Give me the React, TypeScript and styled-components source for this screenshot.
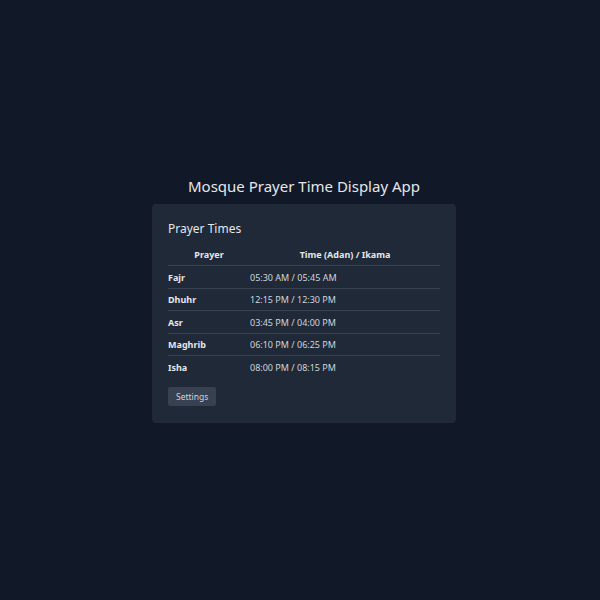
import React from "react";
import styled, { createGlobalStyle } from "styled-components";

const GlobalStyle = createGlobalStyle`
  html, body {
    margin: 0;
    padding: 0;
    background-color: #111827;
  }
  body {
    font-family: "Noto Sans", "Open Sans", sans-serif;
  }
`;

const Page = styled.div`
  min-height: 100vh;
  box-sizing: border-box;
  padding: 0 0 2px 8px;
  display: flex;
  flex-direction: column;
  align-items: center;
  justify-content: center;
  background-color: #111827;
  color: #e5e7eb;
`;

const AppTitle = styled.h1`
  margin: 0 0 7px;
  font-size: 15px;
  font-weight: 400;
  line-height: 22px;
  color: #e5e7eb;
`;

const Card = styled.div`
  width: 304px;
  box-sizing: border-box;
  padding: 16px 16px 17px;
  background-color: #1f2937;
  border-radius: 4px;
`;

const CardTitle = styled.h2`
  margin: 0 0 6px;
  font-size: 12px;
  font-weight: 400;
  line-height: 18px;
  color: #e5e7eb;
`;

const Table = styled.table`
  width: 100%;
  border-collapse: collapse;
  font-size: 9px;
  color: #d1d5db;
`;

const HeadCell = styled.th<{ $width?: number }>`
  width: ${(p) => (p.$width ? `${p.$width}px` : "auto")};
  height: 21px;
  padding: 0;
  font-weight: 700;
  text-align: center;
  color: #e5e7eb;
  border-bottom: 1px solid #374151;
`;

const Row = styled.tr`
  border-bottom: 1px solid #374151;
  &:last-child {
    border-bottom: none;
  }
`;

const Cell = styled.td<{ $bold?: boolean }>`
  height: 21.5px;
  padding: 0;
  text-align: left;
  font-weight: ${(p) => (p.$bold ? 700 : 400)};
  color: ${(p) => (p.$bold ? "#e5e7eb" : "#d1d5db")};
`;

const Button = styled.button`
  margin-top: 9px;
  height: 19px;
  padding: 0 8px;
  border: none;
  border-radius: 2px;
  background-color: #374151;
  color: #d1d5db;
  font-family: inherit;
  font-size: 8.5px;
  cursor: pointer;
`;

const prayers = [
  { name: "Fajr", adan: "05:30 AM", ikama: "05:45 AM" },
  { name: "Dhuhr", adan: "12:15 PM", ikama: "12:30 PM" },
  { name: "Asr", adan: "03:45 PM", ikama: "04:00 PM" },
  { name: "Maghrib", adan: "06:10 PM", ikama: "06:25 PM" },
  { name: "Isha", adan: "08:00 PM", ikama: "08:15 PM" },
];

const App: React.FC = () => {
  return (
    <>
      <GlobalStyle />
      <Page>
        <AppTitle>Mosque Prayer Time Display App</AppTitle>
        <Card>
          <CardTitle>Prayer Times</CardTitle>
          <Table>
            <thead>
              <tr>
                <HeadCell $width={82}>Prayer</HeadCell>
                <HeadCell>Time (Adan) / Ikama</HeadCell>
              </tr>
            </thead>
            <tbody>
              {prayers.map((p) => (
                <Row key={p.name}>
                  <Cell $bold>{p.name}</Cell>
                  <Cell>
                    {p.adan} / {p.ikama}
                  </Cell>
                </Row>
              ))}
            </tbody>
          </Table>
          <Button>Settings</Button>
        </Card>
      </Page>
    </>
  );
};

export default App;
